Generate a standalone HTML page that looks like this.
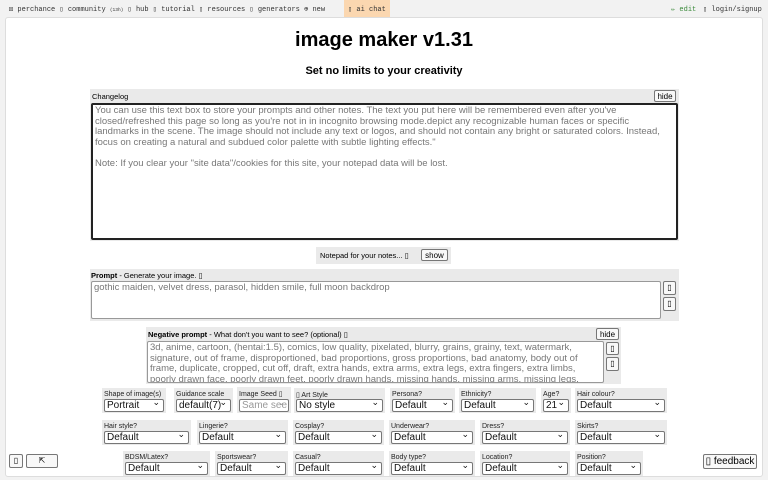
<!DOCTYPE html>
<html><head><meta charset="utf-8"><style>
*{box-sizing:border-box;margin:0;padding:0}
body{width:768px;height:480px;overflow:hidden;background:#f2f2f2;font-family:"Liberation Sans",sans-serif;position:relative;color:#000}
.a{position:absolute}
.top{font-family:"Liberation Mono",monospace;font-size:7px;color:#333;top:5px;white-space:nowrap}
.panel{left:5px;top:17px;width:758px;height:460px;background:#fff;border:1px solid #ddd;border-radius:3px}
.gray{background:#eaeaea}
.btn{background:#f8f8f8;border:1px solid #777;border-radius:2px;font-size:8px;text-align:center;line-height:11px}
.ta{background:#fff;border:1px solid #999;border-radius:2px;font-size:9.5px;color:#777;padding:1px 2px;line-height:10.5px;overflow:hidden}
.cell{background:#eaeaea;font-size:7px;color:#222;padding:3px 2px 0;white-space:nowrap;overflow:hidden}
.sel{position:absolute;left:2px;bottom:1px;right:2px;height:13px;background:#fff;border:1px solid #777;border-radius:2px;font-size:10px;line-height:11px;padding-left:2px;color:#111}
.sel:after{content:"⌄";position:absolute;right:3px;top:-3px;font-size:9px}
</style></head><body>
<div class="a top" style="left:9px">⚄ perchance ▯ community <span style="font-size:4.5px">(13h)</span> ▯ hub ▯ tutorial ▯ resources ▯ generators ⊕ new</div>
<div class="a top" style="left:344px;top:0;height:17px;padding:5px 4px;background:#fbd7b0">▯ ai chat</div>
<div class="a top" style="left:671px;color:#3a8a3a">✏ edit</div>
<div class="a top" style="left:703px">▯ login/signup</div>
<div class="a panel"></div>
<div class="a" style="left:0;width:768px;top:29px;text-align:center;font-size:20px;font-weight:bold">image maker v1.31</div>
<div class="a" style="left:0;width:768px;top:65px;text-align:center;font-size:11px;font-weight:bold">Set no limits to your creativity</div>

<div class="a gray" style="left:90px;top:89px;width:589px;height:152px"></div>
<div class="a" style="left:92px;top:92px;font-size:7.5px">Changelog</div>
<div class="a btn" style="left:654px;top:90px;width:22px;height:12px">hide</div>
<div class="a ta" style="left:91px;top:103px;width:587px;height:137px;border:2px solid #222;color:#777">You can use this text box to store your prompts and other notes. The text you put here will be remembered even after you've closed/refreshed this page so long as you're not in in incognito browsing mode.depict any recognizable human faces or specific landmarks in the scene. The image should not include any text or logos, and should not contain any bright or saturated colors. Instead, focus on creating a natural and subdued color palette with subtle lighting effects."<br><br>Note: If you clear your "site data"/cookies for this site, your notepad data will be lost.</div>

<div class="a gray" style="left:316px;top:247px;width:135px;height:17px"></div>
<div class="a" style="left:320px;top:251px;font-size:7.5px">Notepad for your notes... ▯</div>
<div class="a btn" style="left:421px;top:249px;width:27px;height:12px">show</div>

<div class="a gray" style="left:90px;top:269px;width:589px;height:52px"></div>
<div class="a" style="left:91px;top:271px;font-size:7.5px"><b>Prompt</b> - Generate your image. ▯</div>
<div class="a ta" style="left:91px;top:281px;width:570px;height:38px">gothic maiden, velvet dress, parasol, hidden smile, full moon backdrop</div>
<div class="a btn" style="left:663px;top:281px;width:13px;height:14px">▯</div>
<div class="a btn" style="left:663px;top:297px;width:13px;height:14px">▯</div>

<div class="a gray" style="left:146px;top:327px;width:475px;height:57px"></div>
<div class="a" style="left:148px;top:330px;font-size:7.5px"><b>Negative prompt</b> - What don't you want to see? (optional) ▯</div>
<div class="a btn" style="left:596px;top:328px;width:23px;height:12px">hide</div>
<div class="a ta" style="left:147px;top:341px;width:457px;height:42px">3d, anime, cartoon, (hentai:1.5), comics, low quality, pixelated, blurry, grains, grainy, text, watermark, signature, out of frame, disproportioned, bad proportions, gross proportions, bad anatomy, body out of frame, duplicate, cropped, cut off, draft, extra hands, extra arms, extra legs, extra fingers, extra limbs, poorly drawn face, poorly drawn feet, poorly drawn hands, missing hands, missing arms, missing legs, missing</div>
<div class="a btn" style="left:606px;top:342px;width:13px;height:13px">▯</div>
<div class="a btn" style="left:606px;top:357px;width:13px;height:14px">▯</div>

<div class="a cell" style="left:102px;top:388px;width:64px;height:25px">Shape of image(s)<div class="sel">Portrait</div></div>
<div class="a cell" style="left:174px;top:388px;width:59px;height:25px">Guidance scale<div class="sel">default(7)</div></div>
<div class="a cell" style="left:237px;top:387px;width:54px;height:26px">Image Seed ▯<div class="sel" style="color:#999">Same see</div></div>
<div class="a cell" style="left:294px;top:388px;width:91px;height:25px">▯ Art Style<div class="sel">No style</div></div>
<div class="a cell" style="left:390px;top:388px;width:65px;height:25px">Persona?<div class="sel">Default</div></div>
<div class="a cell" style="left:459px;top:388px;width:77px;height:25px">Ethnicity?<div class="sel">Default</div></div>
<div class="a cell" style="left:541px;top:388px;width:30px;height:25px">Age?<div class="sel">21</div></div>
<div class="a cell" style="left:575px;top:388px;width:92px;height:25px">Hair colour?<div class="sel">Default</div></div>

<div class="a cell" style="left:102px;top:420px;width:89px;height:25px">Hair style?<div class="sel">Default</div></div>
<div class="a cell" style="left:197px;top:420px;width:91px;height:25px">Lingerie?<div class="sel">Default</div></div>
<div class="a cell" style="left:293px;top:420px;width:91px;height:25px">Cosplay?<div class="sel">Default</div></div>
<div class="a cell" style="left:389px;top:420px;width:86px;height:25px">Underwear?<div class="sel">Default</div></div>
<div class="a cell" style="left:480px;top:420px;width:90px;height:25px">Dress?<div class="sel">Default</div></div>
<div class="a cell" style="left:575px;top:420px;width:92px;height:25px">Skirts?<div class="sel">Default</div></div>

<div class="a cell" style="left:123px;top:451px;width:87px;height:25px">BDSM/Latex?<div class="sel">Default</div></div>
<div class="a cell" style="left:215px;top:451px;width:73px;height:25px">Sportswear?<div class="sel">Default</div></div>
<div class="a cell" style="left:293px;top:451px;width:91px;height:25px">Casual?<div class="sel">Default</div></div>
<div class="a cell" style="left:389px;top:451px;width:86px;height:25px">Body type?<div class="sel">Default</div></div>
<div class="a cell" style="left:480px;top:451px;width:90px;height:25px">Location?<div class="sel">Default</div></div>
<div class="a cell" style="left:575px;top:451px;width:68px;height:25px">Position?<div class="sel">Default</div></div>

<div class="a btn" style="left:9px;top:454px;width:14px;height:14px;line-height:12px">▯</div>
<div class="a btn" style="left:26px;top:454px;width:32px;height:14px;line-height:12px">⇱</div>
<div class="a btn" style="left:703px;top:454px;width:54px;height:15px;font-size:10px;line-height:13px">▯ feedback</div>
</body></html>
